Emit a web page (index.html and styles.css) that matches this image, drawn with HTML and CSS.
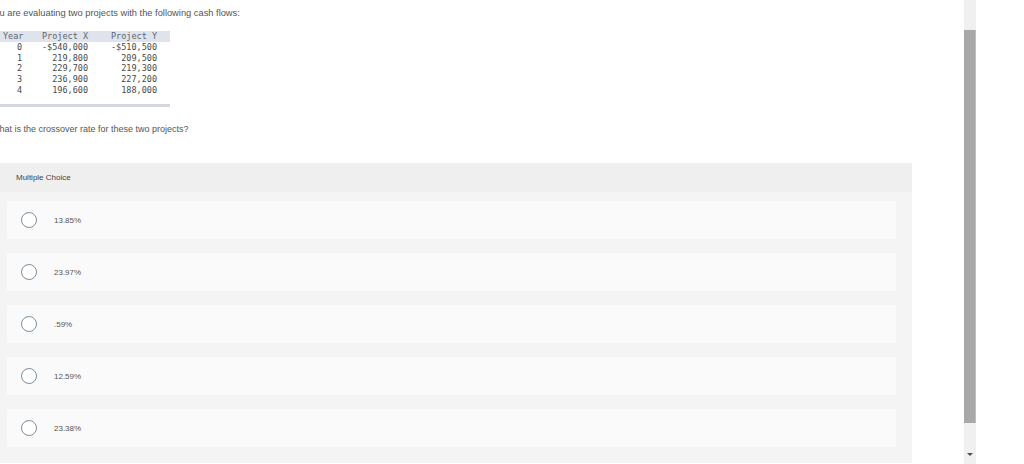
FILE: index.html
```html
<!DOCTYPE html>
<html>
<head>
<meta charset="utf-8">
<link rel="stylesheet" href="styles.css">
</head>
<body>
<div class="page">
  <div class="content">
    <div class="stem">
      <p class="line first">You are evaluating two projects with the following cash flows:</p>
      <div class="cash">
        <div class="row head"><span class="c1">Year</span><span class="c2">Project X</span><span class="c3">Project Y</span></div>
        <div class="row"><span class="c1">0</span><span class="c2">-$540,000</span><span class="c3">-$510,500</span></div>
        <div class="row"><span class="c1">1</span><span class="c2">219,800</span><span class="c3">209,500</span></div>
        <div class="row"><span class="c1">2</span><span class="c2">229,700</span><span class="c3">219,300</span></div>
        <div class="row"><span class="c1">3</span><span class="c2">236,900</span><span class="c3">227,200</span></div>
        <div class="row"><span class="c1">4</span><span class="c2">196,600</span><span class="c3">188,000</span></div>
      </div>
      <p class="line question">What is the crossover rate for these two projects?</p>
    </div>
    <div class="panel">
      <div class="panel-head">Multiple Choice</div>
      <div class="options">
        <div class="option"><span class="radio"></span><span class="label">13.85%</span></div>
        <div class="option"><span class="radio"></span><span class="label">23.97%</span></div>
        <div class="option"><span class="radio"></span><span class="label">.59%</span></div>
        <div class="option"><span class="radio"></span><span class="label">12.59%</span></div>
        <div class="option"><span class="radio"></span><span class="label">23.38%</span></div>
      </div>
    </div>
  </div>
  <div class="scrollbar">
    <div class="track-top"></div>
    <div class="thumb"></div>
    <div class="track-bottom"><span class="arrow"></span></div>
  </div>
</div>
</body>
</html>
```

FILE: styles.css
```css
html, body {
  margin: 0;
  padding: 0;
  background: #ffffff;
  overflow: hidden;
}
.page {
  display: flex;
  width: 1024px;
  height: 464px;
}
.content {
  width: 964px;
  height: 464px;
  overflow: hidden;
  font-family: "Liberation Sans", Arial, sans-serif;
  color: #333;
}
.stem {
  padding-top: 8px;
}
.line {
  margin: 0;
  font-size: 9.3px;
  line-height: 11px;
  margin-left: -11px;
  color: #555;
  white-space: nowrap;
}
.cash {
  margin-top: 12px;
  width: 170px;
  font-family: "DejaVu Sans Mono", "Liberation Mono", monospace;
  font-size: 8.5px;
  color: #4a4a4a;
  border-bottom: 3px solid #d3d6dc;
  padding-bottom: 9px;
}
.row {
  display: grid;
  grid-template-columns: 30px 59px 81px;
  height: 10.7px;
  line-height: 10.7px;
}
.row.head {
  background: #dfe4ec;
  color: #5b6470;
  height: 11px;
  line-height: 11px;
}
.c1 { padding-left: 17px; }
.head .c1 { padding-left: 3px; }
.c2 { text-align: right; padding-right: 1px; }
.c3 { text-align: right; padding-right: 13px; }
.question {
  margin-top: 17px;
  margin-left: -9px;
  font-size: 9px;
}
.panel {
  margin-top: 28px;
  width: 912px;
  height: 300px;
  background: #f4f4f4;
}
.panel-head {
  height: 29px;
  line-height: 29px;
  background: #efefef;
  padding-left: 16px;
  font-size: 8px;
  color: #444;
}
.options {
  display: flex;
  flex-direction: column;
  gap: 14px;
  padding: 9px 16px 0 7px;
}
.option {
  height: 38px;
  background: #fafafa;
  display: flex;
  align-items: center;
}
.radio {
  width: 14px;
  height: 14px;
  border: 1.3px solid #7c8f9f;
  border-radius: 50%;
  margin-left: 14px;
  background: #fff;
}
.label {
  margin-left: 17px;
  font-size: 8px;
  color: #555;
}
.scrollbar {
  width: 12px;
  height: 464px;
  display: flex;
  flex-direction: column;
  background: #f0f0f0;
}
.track-top { height: 30px; }
.thumb {
  height: 393px;
  background: #a8a8a8;
  border-right: 1px solid #bdbdbd;
  width: 11px;
}
.track-bottom {
  flex: 1;
  position: relative;
}
.arrow {
  position: absolute;
  left: 3px;
  top: 30px;
  width: 0;
  height: 0;
  border-left: 3px solid transparent;
  border-right: 3px solid transparent;
  border-top: 3px solid #505050;
}
```
